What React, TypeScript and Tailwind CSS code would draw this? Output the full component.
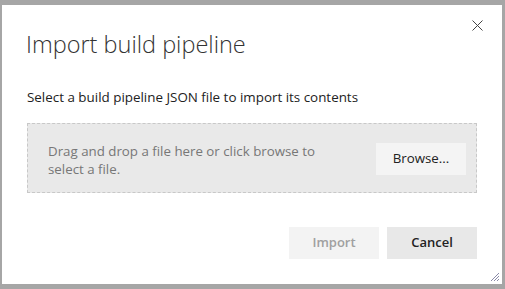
import React from "react";

export default function App() {
  return (
    <div className="w-[505px] h-[289px] bg-[#a6a6a6] pt-[5px] pl-[2px] pr-[3px] pb-[5px]" style={{ fontFamily: '"Open Sans", "Noto Sans", sans-serif' }}>
      <div className="relative w-full h-full bg-white flex flex-col">
        <button className="absolute right-[19px] top-[14px] w-[12px] h-[12px] flex items-center justify-center">
          <svg width="11" height="11" viewBox="0 0 11 11">
            <path d="M0.5 0.5 L10.5 10.5 M10.5 0.5 L0.5 10.5" stroke="#444" strokeWidth="1" />
          </svg>
        </button>
        <h1 className="pl-[24px] pt-[21px] text-[23.5px] font-light leading-[36px] text-[#333]">Import build pipeline</h1>
        <p className="pl-[25px] mt-[25px] text-[13.4px] leading-[20px] text-[#222]">Select a build pipeline JSON file to import its contents</p>
        <div className="mx-[25px] mt-[16px] h-[70px] bg-[#e9e9e9] border border-dashed border-[#c8c8c8] flex items-center justify-between pl-[20px] pr-[10px]">
          <p className="w-[290px] mt-[4px] text-[13.3px] leading-[18px] text-[#777]">Drag and drop a file here or click browse to select a file.</p>
          <button className="w-[90px] h-[32px] mt-[2px] bg-[#f4f4f4] text-[13.3px] text-[#222]">Browse...</button>
        </div>
        <div className="flex justify-end gap-[8px] mr-[25px] mt-[34px]">
          <button className="w-[90px] h-[32px] bg-[#f3f3f3] text-[13px] font-semibold text-[#a0a0a0]">Import</button>
          <button className="w-[90px] h-[32px] bg-[#e8e8e8] text-[13px] font-semibold text-[#222]">Cancel</button>
        </div>
        <svg className="absolute right-[2px] bottom-[2px]" width="10" height="10" viewBox="0 0 10 10">
          <path d="M9 1 L1 9 M9 4 L4 9 M9 7 L7 9" stroke="#8a8aa8" strokeWidth="1" />
        </svg>
      </div>
    </div>
  );
}
